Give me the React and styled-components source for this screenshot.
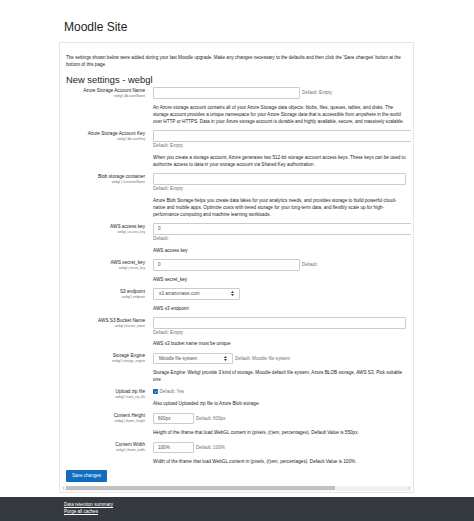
import styled, { createGlobalStyle } from 'styled-components';

const GlobalStyle = createGlobalStyle`
  html, body {
    margin: 0;
    padding: 0;
    background: #fff;
  }
  body {
    font-family: "Liberation Sans", Arial, sans-serif;
    color: #1d2125;
  }
`;

const Page = styled.div`
  padding: 20px 0 0;
`;

const Main = styled.div`
  padding: 0 60px 0 59px;
`;

const Title = styled.h1`
  margin: 0 0 8px 5px;
  font-size: 12px;
  line-height: 14px;
  font-weight: 400;
`;

const Card = styled.div`
  border: 1px solid #e6e6e6;
  padding: 11px 2px 1px;
  margin-bottom: 4px;
`;

const Scroller = styled.div`
  overflow: hidden;
  padding: 0 4px 4px;
`;

const Scrollbar = styled.div`
  display: flex;
  align-items: center;
  height: 5px;
  background: #f1f1f1;
  gap: 1px;
`;

const ScrollArrow = styled.span`
  width: 0;
  height: 0;
  border-top: 1.2px solid transparent;
  border-bottom: 1.2px solid transparent;
  ${(p) => (p.$dir === 'left' ? 'border-right: 1.5px solid #a3a3a3;' : 'border-left: 1.5px solid #a3a3a3;')}
  margin: 0 1px;
`;

const ScrollTrack = styled.div`
  flex: 1;
  height: 100%;
  display: flex;
  align-items: center;
`;

const ScrollThumb = styled.div`
  width: ${(p) => p.$size}%;
  height: 3.5px;
  background: #c1c1c1;
`;

const Intro = styled.p`
  margin: 0;
  width: 345px;
  font-size: 4.6px;
  line-height: 7px;
`;

const Heading = styled.h3`
  margin: 6px 0 2px;
  font-size: 9.4px;
  line-height: 11px;
  font-weight: 400;
`;

const Row = styled.div`
  display: grid;
  grid-template-columns: 87px max-content;
  margin-bottom: 5.5px;
`;

const LabelCol = styled.div`
  text-align: right;
  padding-right: 8px;
  padding-top: 0.5px;
`;

const Label = styled.div`
  font-size: 4.7px;
  line-height: 6px;
`;

const SubLabel = styled.div`
  font-size: 3.2px;
  line-height: 5px;
  color: #6a737b;
`;

const FieldCol = styled.div`
  display: flex;
  flex-direction: column;
`;

const Line = styled.div`
  display: flex;
  align-items: center;
  min-height: ${(p) => (p.$short ? 7 : 11.5)}px;
  gap: 2px;
`;

const TextInput = styled.div`
  box-sizing: border-box;
  width: ${(p) => p.$w}px;
  height: 11.5px;
  border: 0.7px solid #c8cdd2;
  border-radius: 1px;
  background: #fff;
  padding: 0 4px;
  display: flex;
  align-items: center;
  font-size: 4.6px;
  color: #495057;
`;

const Select = styled(TextInput)`
  justify-content: space-between;
  padding: 0 5px 0 5px;
`;

const Default = styled.span`
  font-size: 4.6px;
  line-height: 7px;
  color: #6a737b;
  white-space: nowrap;
`;

const DefaultBelow = styled(Default)`
  display: block;
`;

const Desc = styled.div`
  margin-top: ${(p) => (p.$tight ? 4.5 : 5)}px;
  width: 254px;
  font-size: 4.65px;
  line-height: 7px;
`;

const Check = styled.span`
  box-sizing: border-box;
  width: 4.5px;
  height: 4.5px;
  border-radius: 0.8px;
  background: #0f6cbf;
  display: inline-flex;
  align-items: center;
  justify-content: center;
`;

const Button = styled.button`
  height: 12px;
  margin: -1px 0 0;
  padding: 0 6px;
  border: none;
  border-radius: 1px;
  background: #0f6cbf;
  color: #fff;
  font-family: inherit;
  font-size: 4.6px;
  line-height: 12px;
  display: block;
`;

const Footer = styled.footer`
  background: #343a40;
  padding: 4.5px 64px 9px;
`;

const FooterLink = styled.a`
  display: block;
  color: #fff;
  font-size: 4.6px;
  line-height: 7px;
  text-decoration: underline;
`;

const Arrows = () => (
  <svg width="3" height="5" viewBox="0 0 6 10">
    <path d="M3 0 L6 4 H0 Z M3 10 L0 6 H6 Z" fill="#343a40" />
  </svg>
);

const settings = [
  {
    label: 'Azure Storage Account Name',
    name: 'AccountName',
    kind: 'text',
    w: 147,
    def: 'Default: Empty',
    desc: 'An Azure storage account contains all of your Azure Storage data objects: blobs, files, queues, tables, and disks. The storage account provides a unique namespace for your Azure Storage data that is accessible from anywhere in the world over HTTP or HTTPS. Data in your Azure storage account is durable and highly available, secure, and massively scalable.',
  },
  {
    label: 'Azure Storage Account Key',
    name: 'AccountKey',
    kind: 'text',
    w: 355,
    def: 'Default: Empty',
    below: true,
    desc: 'When you create a storage account, Azure generates two 512-bit storage account access keys. These keys can be used to authorize access to data in your storage account via Shared Key authorization.',
  },
  {
    label: 'Blob storage container',
    name: 'ContainerName',
    kind: 'text',
    w: 253,
    def: 'Default: Empty',
    below: true,
    desc: 'Azure Blob Storage helps you create data lakes for your analytics needs, and provides storage to build powerful cloud-native and mobile apps. Optimize costs with tiered storage for your long-term data, and flexibly scale up for high-performance computing and machine learning workloads.',
  },
  {
    label: 'AWS access key',
    name: 'access_key',
    kind: 'text',
    w: 355,
    value: '0',
    def: 'Default:',
    below: true,
    desc: 'AWS access key',
  },
  {
    label: 'AWS secret_key',
    name: 'secret_key',
    kind: 'text',
    w: 147,
    value: '0',
    def: 'Default:',
    desc: 'AWS secret_key',
  },
  {
    label: 'S3 endpoint',
    name: 'endpoint',
    kind: 'select',
    w: 87,
    value: 's3.amazonaws.com',
    desc: 'AWS s3 endpoint',
  },
  {
    label: 'AWS S3 Bucket Name',
    name: 'bucket_name',
    kind: 'text',
    w: 253,
    def: 'Default: Empty',
    below: true,
    tight: true,
    desc: 'AWS s3 bucket name must be unique',
  },
  {
    label: 'Storage Engine',
    name: 'storage_engine',
    kind: 'select',
    w: 80,
    value: 'Moodle file system',
    def: 'Default: Moodle file system',
    tight: true,
    desc: 'Storage Engine: Webgl provide 3 kind of storage. Moodle default file system, Azure BLOB storage, AWS S3. Pick suitable one',
  },
  {
    label: 'Upload zip file',
    name: 'store_zip_file',
    kind: 'check',
    def: 'Default: Yes',
    desc: 'Also upload Uploaded zip file to Azure Blob storage.',
  },
  {
    label: 'Content Height',
    name: 'iframe_height',
    kind: 'text',
    w: 41,
    value: '600px',
    def: 'Default: 600px',
    desc: 'Height of the iframe that load WebGL content in (pixels, (r)em, percentages). Default Value is 550px.',
  },
  {
    label: 'Content Width',
    name: 'iframe_width',
    kind: 'text',
    w: 41,
    value: '100%',
    def: 'Default: 100%',
    desc: 'Width of the iframe that load WebGL content in (pixels, (r)em, percentages). Default Value is 100%.',
  },
];

const Field = ({ s }) => {
  let control;
  if (s.kind === 'select') {
    control = (
      <Select $w={s.w}>
        <span>{s.value}</span>
        <Arrows />
      </Select>
    );
  } else if (s.kind === 'check') {
    control = (
      <Check>
        <svg width="3.5" height="3.5" viewBox="0 0 10 10">
          <path d="M2 5.2 L4.2 7.4 L8.2 2.8" stroke="#fff" strokeWidth="1.8" fill="none" />
        </svg>
      </Check>
    );
  } else {
    control = <TextInput $w={s.w}>{s.value}</TextInput>;
  }

  return (
    <Row>
      <LabelCol>
        <Label>{s.label}</Label>
        <SubLabel>webgl | {s.name}</SubLabel>
      </LabelCol>
      <FieldCol>
        <Line $short={s.kind === 'check'}>
          {control}
          {s.def && !s.below && <Default>{s.def}</Default>}
        </Line>
        {s.def && s.below && <DefaultBelow>{s.def}</DefaultBelow>}
        <Desc $tight={s.tight}>{s.desc}</Desc>
      </FieldCol>
    </Row>
  );
};

export default function App() {
  return (
    <>
      <GlobalStyle />
      <Page>
        <Main>
          <Title>Moodle Site</Title>
          <Card>
            <Scroller>
              <Intro>
                The settings shown below were added during your last Moodle upgrade. Make any
                changes necessary to the defaults and then click the 'Save changes' button at the
                bottom of this page.
              </Intro>
              <Heading>New settings - webgl</Heading>
              {settings.map((s) => (
                <Field key={s.name} s={s} />
              ))}
              <Button>Save changes</Button>
            </Scroller>
            <Scrollbar>
              <ScrollArrow $dir="left" />
              <ScrollTrack>
                <ScrollThumb $size={79} />
              </ScrollTrack>
              <ScrollArrow $dir="right" />
            </Scrollbar>
          </Card>
        </Main>
        <Footer>
          <FooterLink href="#">Data retention summary</FooterLink>
          <FooterLink href="#">Purge all caches</FooterLink>
        </Footer>
      </Page>
    </>
  );
}
